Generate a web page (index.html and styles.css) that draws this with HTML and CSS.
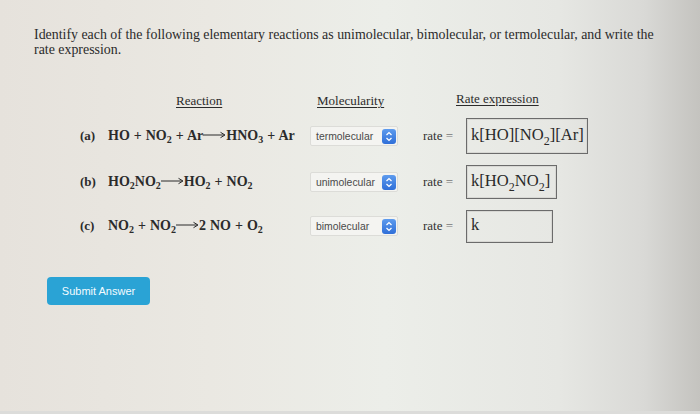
FILE: index.html
```html
<!DOCTYPE html>
<html>
<head>
<meta charset="utf-8">
<link rel="stylesheet" href="styles.css">
</head>
<body>
<div class="page">
  <p class="prompt">Identify each of the following elementary reactions as unimolecular, bimolecular, or termolecular, and write the rate expression.</p>

  <div class="grid">
    <div class="hd hd-reaction"><span>Reaction</span></div>
    <div class="hd hd-mol"><span>Molecularity</span></div>
    <div class="hd hd-rate"><span>Rate expression</span></div>

    <div class="lbl">(a)</div>
    <div class="rxn">HO + NO<sub>2</sub> + Ar<svg class="arr" width="23" height="8" viewBox="0 0 23 8"><path d="M0 4H21" stroke="#2a2a2a" stroke-width="1"/><path d="M17.5 1.3L22 4L17.5 6.7" fill="none" stroke="#2a2a2a" stroke-width="1"/></svg>HNO<sub>3</sub> + Ar</div>
    <div class="selcell"><div class="sel"><span>termolecular</span><i class="btn"><svg width="8" height="11" viewBox="0 0 8 11"><path d="M1.5 4L4 1.6L6.5 4M1.5 7L4 9.4L6.5 7" fill="none" stroke="#fff" stroke-width="1.3"/></svg></i></div></div>
    <div class="rate">rate <span class="eq">=</span></div>
    <div class="boxcell"><div class="box box-a">k[HO][NO<sub>2</sub>][Ar]</div></div>

    <div class="lbl">(b)</div>
    <div class="rxn">HO<sub>2</sub>NO<sub>2</sub><svg class="arr" width="23" height="8" viewBox="0 0 23 8"><path d="M0 4H21" stroke="#2a2a2a" stroke-width="1"/><path d="M17.5 1.3L22 4L17.5 6.7" fill="none" stroke="#2a2a2a" stroke-width="1"/></svg>HO<sub>2</sub> + NO<sub>2</sub></div>
    <div class="selcell"><div class="sel"><span>unimolecular</span><i class="btn"><svg width="8" height="11" viewBox="0 0 8 11"><path d="M1.5 4L4 1.6L6.5 4M1.5 7L4 9.4L6.5 7" fill="none" stroke="#fff" stroke-width="1.3"/></svg></i></div></div>
    <div class="rate">rate <span class="eq">=</span></div>
    <div class="boxcell"><div class="box box-b">k[HO<sub>2</sub>NO<sub>2</sub>]</div></div>

    <div class="lbl">(c)</div>
    <div class="rxn">NO<sub>2</sub> + NO<sub>2</sub><svg class="arr" width="23" height="8" viewBox="0 0 23 8"><path d="M0 4H21" stroke="#2a2a2a" stroke-width="1"/><path d="M17.5 1.3L22 4L17.5 6.7" fill="none" stroke="#2a2a2a" stroke-width="1"/></svg>2 NO + O<sub>2</sub></div>
    <div class="selcell"><div class="sel"><span>bimolecular</span><i class="btn"><svg width="8" height="11" viewBox="0 0 8 11"><path d="M1.5 4L4 1.6L6.5 4M1.5 7L4 9.4L6.5 7" fill="none" stroke="#fff" stroke-width="1.3"/></svg></i></div></div>
    <div class="rate">rate <span class="eq">=</span></div>
    <div class="boxcell"><div class="box box-c">k</div></div>
  </div>

  <button class="submit">Submit Answer</button>
</div>
<div class="bottom"></div>
</body>
</html>
```

FILE: styles.css
```css
html, body {
  margin: 0;
  padding: 0;
  height: 100%;
}
body {
  width: 700px;
  height: 414px;
  overflow: hidden;
  background: linear-gradient(90deg, #e6e2dc 0%, #eae8e2 30%, #eceee9 55%, #e6e7e3 80%, #d9d9d6 92%, #c4c3bf 100%);
  font-family: "Liberation Serif", "Times New Roman", serif;
  color: #2b2b2b;
  display: flex;
  flex-direction: column;
}
.page {
  flex: 1;
  padding: 27px 0 0 34px;
}
.prompt {
  margin: 0;
  width: 625px;
  font-size: 13.9px;
  line-height: 15px;
}
.grid {
  display: grid;
  grid-template-columns: 62px 202px 113px 43px 160px;
  grid-template-rows: 25px 46px 46px 42px;
  margin-left: 12px;
  margin-top: 31px;
  align-items: center;
}
.hd {
  font-size: 13px;
}
.hd span {
  text-decoration: underline;
  text-underline-offset: 2px;
  text-decoration-thickness: 1px;
}
.hd-reaction {
  grid-column: 1 / span 2;
  padding-left: 130px;
}
.hd-mol {
  padding-left: 7px;
}
.hd-rate {
  grid-column: 4 / span 2;
  padding-left: 33px;
  margin-top: -3px;
}
.lbl {
  font-weight: bold;
  font-size: 13px;
  padding-left: 34px;
}
.rxn {
  font-weight: bold;
  font-size: 14px;
  white-space: nowrap;
  word-spacing: 0.5px;
}
.rxn sub {
  font-size: 10px;
  vertical-align: -3px;
  line-height: 0;
}
.arr {
  vertical-align: 1px;
}
.sel {
  width: 86px;
  height: 18px;
  border: 1px solid #dcdcd8;
  border-radius: 2px;
  background: #f4f4f1;
  display: flex;
  align-items: center;
  justify-content: space-between;
  font-family: "Liberation Sans", Arial, sans-serif;
  font-size: 10.4px;
  color: #4a4a4a;
}
.sel span {
  padding-left: 5px;
}
.btn {
  width: 14px;
  height: 15px;
  margin-right: 1px;
  border-radius: 3px;
  background: linear-gradient(#5d9bee, #2f6fd8);
  display: flex;
  align-items: center;
  justify-content: center;
}
.rate {
  font-size: 13px;
  color: #333;
  white-space: nowrap;
}
.eq {
  color: #777;
}
.box {
  box-sizing: border-box;
  border: 1.5px solid #6b6b6b;
  box-shadow: inset 0 0 0 1px #d8d8d4;
  font-size: 16.6px;
  padding-left: 4px;
  color: #2a2a2a;
  white-space: nowrap;
}
.box sub {
  font-size: 12px;
  vertical-align: -5px;
  line-height: 0;
}
.box-a { width: 122px; height: 36px; line-height: 31px; }
.box-b { width: 91px; height: 34px; line-height: 29px; }
.box-c { width: 87px; height: 33px; line-height: 28px; }
.submit {
  display: block;
  margin: 30px 0 0 13px;
  width: 103px;
  height: 28px;
  border: none;
  border-radius: 4px;
  background: #2aa3d5;
  color: #f4fbff;
  font-family: "Liberation Sans", Arial, sans-serif;
  font-size: 11px;
  padding: 0;
}
.bottom {
  height: 3px;
  background: #dcdcda;
}
```
